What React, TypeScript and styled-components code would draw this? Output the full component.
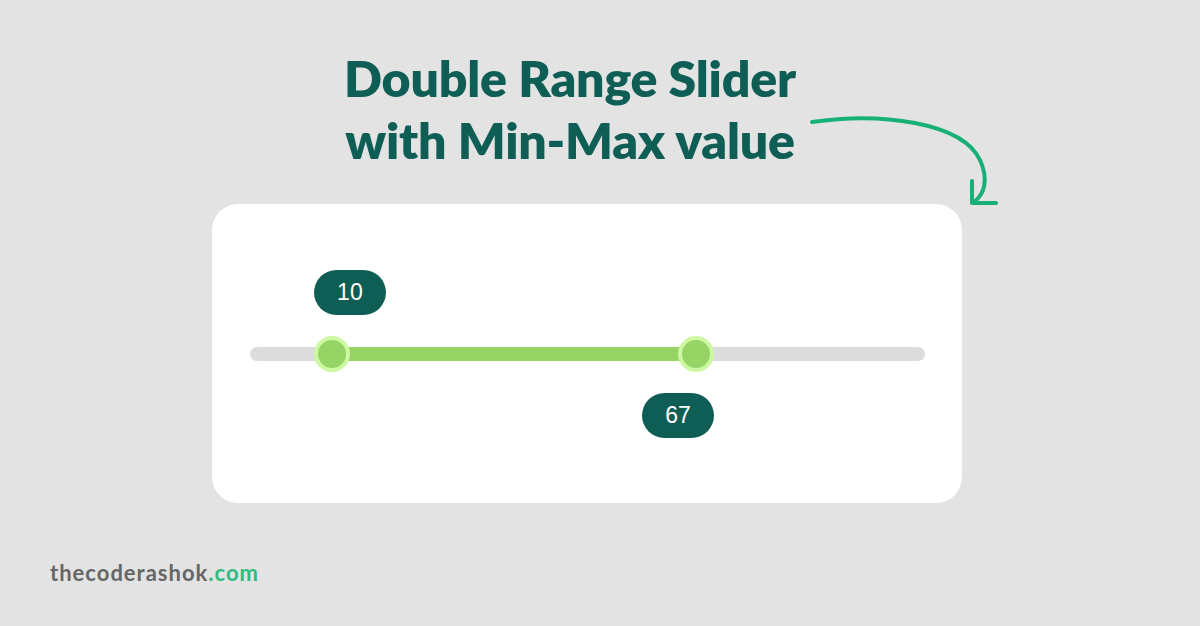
import React, { FC } from "react";
import styled, { createGlobalStyle } from "styled-components";

const colors = {
  page: "#e3e3e3",
  ink: "#0f5e56",
  accent: "#17b077",
  track: "#dcdcdc",
  fill: "#96d465",
  thumbRing: "#cdf9a3",
  grey: "#666666",
};

const GlobalStyle = createGlobalStyle`
  html, body {
    margin: 0;
    padding: 0;
    background: ${colors.page};
  }
  #root {
    width: 1200px;
    height: 626px;
    overflow: hidden;
  }
`;

const Page = styled.div`
  position: relative;
  width: 1200px;
  height: 626px;
  display: flex;
  flex-direction: column;
  background: ${colors.page};
`;

const Header = styled.header`
  position: relative;
  display: flex;
  justify-content: center;
  padding: 47px 60px 0 0;
  height: 204px;
  box-sizing: border-box;
  flex-shrink: 0;
`;

const Title = styled.h1`
  margin: 0;
  text-align: center;
  color: ${colors.ink};
  font-family: "Lato", "Noto Sans", sans-serif;
  font-weight: 800;
  font-size: 50px;
  line-height: 62px;
  letter-spacing: -0.2px;
`;

const Arrow = styled.svg`
  position: absolute;
  left: 0;
  top: 0;
  overflow: visible;
  pointer-events: none;
`;

const Card = styled.section`
  margin-left: 212px;
  width: 750px;
  height: 299px;
  flex-shrink: 0;
  background: #ffffff;
  border-radius: 26px;
  padding: 0 37px 0 38px;
  box-sizing: border-box;
  display: flex;
  align-items: center;
`;

const Slider = styled.div`
  position: relative;
  width: 100%;
  height: 14px;
  border-radius: 7px;
  background: ${colors.track};
`;

const Range = styled.div`
  position: absolute;
  top: 0;
  height: 14px;
  background: ${colors.fill};
`;

const Thumb = styled.div`
  position: absolute;
  top: 50%;
  width: 36px;
  height: 36px;
  margin: -18px 0 0 -18px;
  border-radius: 50%;
  box-sizing: border-box;
  border: 4px solid ${colors.thumbRing};
  background: ${colors.fill};
`;

const Bubble = styled.div<{ $below?: boolean }>`
  position: absolute;
  top: ${(p) => (p.$below ? "46px" : "-77px")};
  width: 72px;
  height: 45px;
  border-radius: 23px;
  background: ${colors.ink};
  color: #ffffff;
  font-family: "Liberation Sans", Arial, sans-serif;
  font-size: 23px;
  line-height: 45px;
  text-align: center;
`;

const Footer = styled.footer`
  margin-top: auto;
  padding: 0 0 40px 50px;
  font-family: "Lato", "Noto Sans", sans-serif;
  font-weight: 700;
  font-size: 22px;
  color: ${colors.grey};
  letter-spacing: 1px;

  span {
    color: #2dbb7e;
  }
`;

interface SliderProps {
  min: number;
  max: number;
}

// thumbs travel inside the track, inset by half a thumb on each side
const TRACK = 675;
const INSET = 18;
const thumbAt = (v: number) => INSET + ((TRACK - INSET * 2) * v) / 100;

const DoubleRange: FC<SliderProps> = ({ min, max }) => (
  <Slider>
    <Range style={{ left: thumbAt(min), width: thumbAt(max) - thumbAt(min) }} />
    <Thumb style={{ left: thumbAt(min) }} />
    <Thumb style={{ left: thumbAt(max) }} />
    <Bubble style={{ left: thumbAt(min) - 18 }}>{min}</Bubble>
    <Bubble $below style={{ left: thumbAt(max) - 54 }}>
      {max}
    </Bubble>
  </Slider>
);

const App: FC = () => (
  <Page>
    <GlobalStyle />
    <Header>
      <Title>
        Double Range Slider
        <br />
        with Min-Max value
      </Title>
      <Arrow width="1200" height="220" viewBox="0 0 1200 220">
        <path
          d="M812 122 C 880 112, 962 122, 980 160 C 989 180, 984 194, 975 201"
          fill="none"
          stroke={colors.accent}
          strokeWidth="4"
          strokeLinecap="round"
        />
        <path
          d="M972 181 L972 203 L996 203"
          fill="none"
          stroke={colors.accent}
          strokeWidth="4"
          strokeLinecap="round"
          strokeLinejoin="round"
        />
      </Arrow>
    </Header>
    <Card>
      <DoubleRange min={10} max={67} />
    </Card>
    <Footer>
      thecoderashok<span>.com</span>
    </Footer>
  </Page>
);

export default App;
